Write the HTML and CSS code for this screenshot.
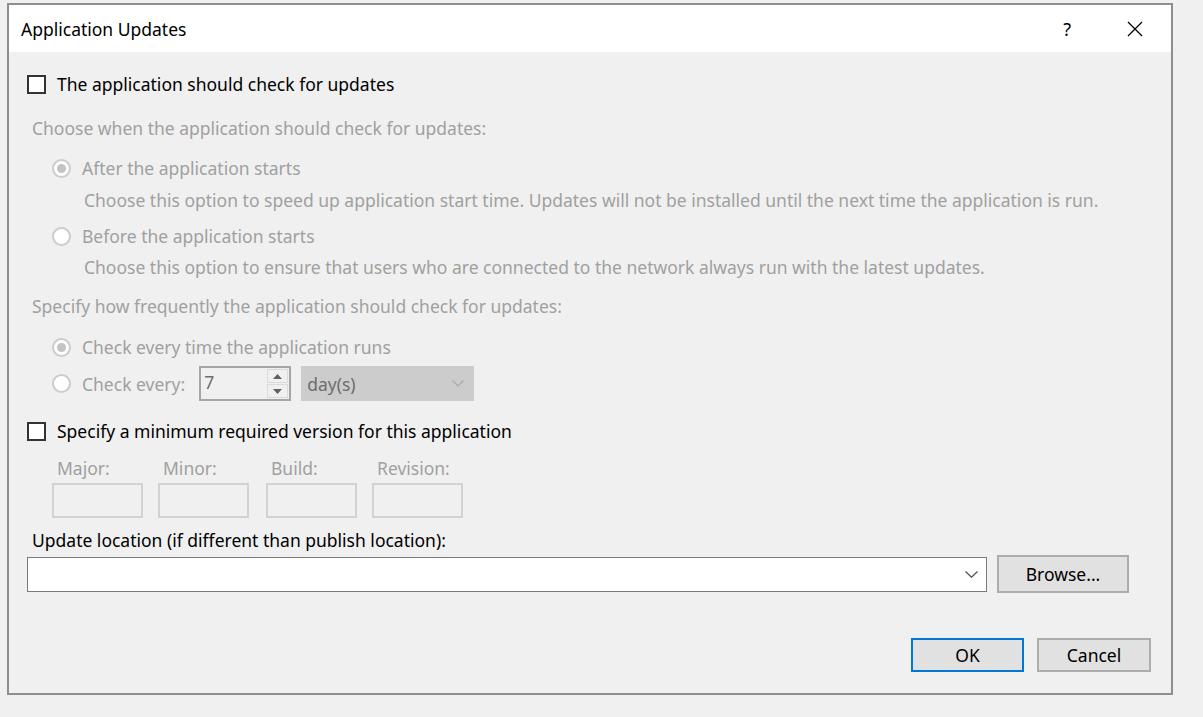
FILE: index.html
```html
<!DOCTYPE html>
<html lang="en">
<head>
    <meta charset="UTF-8">
    <meta name="viewport" content="width=device-width, initial-scale=1.0">
    <title>Application Updates</title>
    <link rel="stylesheet" href="styles.css">
</head>
<body>

    <div class="dialog">
        <div class="titlebar">
            <span class="title">Application Updates</span>
            <span class="help">?</span>
            <svg class="close" width="16" height="16" viewBox="0 0 16 16">
                <path d="M1 1 L15 15 M15 1 L1 15" stroke="#000" stroke-width="1.3" fill="none"/>
            </svg>
        </div>

        <div class="content">
            <div class="row r1">
                <span class="checkbox"></span>
                <span class="text">The application should check for updates</span>
            </div>

            <div class="row r2 off indent1">Choose when the application should check for updates:</div>

            <div class="row r3 indent2">
                <span class="radio checked"></span>
                <span class="text off">After the application starts</span>
            </div>
            <div class="row r4 off indent3">Choose this option to speed up application start time. Updates will not be installed until the next time the application is run.</div>

            <div class="row r5 indent2">
                <span class="radio"></span>
                <span class="text off">Before the application starts</span>
            </div>
            <div class="row r6 off indent3">Choose this option to ensure that users who are connected to the network always run with the latest updates.</div>

            <div class="row r7 off indent1">Specify how frequently the application should check for updates:</div>

            <div class="row r8 indent2">
                <span class="radio checked"></span>
                <span class="text off">Check every time the application runs</span>
            </div>

            <div class="row r9 indent2">
                <span class="radio"></span>
                <span class="text off">Check every:</span>
                <div class="spin">
                    <span class="spin-val">7</span>
                    <div class="spin-btns">
                        <span class="spin-btn">
                            <svg width="9" height="5" viewBox="0 0 9 5"><path d="M0 5 L4.5 0 L9 5 Z" fill="#606060"/></svg>
                        </span>
                        <span class="spin-btn">
                            <svg width="9" height="5" viewBox="0 0 9 5"><path d="M0 0 L4.5 5 L9 0 Z" fill="#606060"/></svg>
                        </span>
                    </div>
                </div>
                <div class="unit">
                    <span>day(s)</span>
                    <svg width="12" height="7" viewBox="0 0 12 7"><path d="M0.5 0.5 L6 6 L11.5 0.5" stroke="#a8a8a8" stroke-width="1.2" fill="none"/></svg>
                </div>
            </div>

            <div class="row r10">
                <span class="checkbox"></span>
                <span class="text">Specify a minimum required version for this application</span>
            </div>

            <div class="versions">
                <div class="ver">
                    <span class="ver-label off">Major:</span>
                    <span class="ver-box"></span>
                </div>
                <div class="ver">
                    <span class="ver-label off">Minor:</span>
                    <span class="ver-box"></span>
                </div>
                <div class="ver">
                    <span class="ver-label off">Build:</span>
                    <span class="ver-box"></span>
                </div>
                <div class="ver">
                    <span class="ver-label off">Revision:</span>
                    <span class="ver-box"></span>
                </div>
            </div>

            <div class="row r13 indent1">Update location (if different than publish location):</div>

            <div class="location">
                <div class="combo">
                    <svg width="13" height="7" viewBox="0 0 13 7"><path d="M0.5 0.5 L6.5 6.2 L12.5 0.5" stroke="#555" stroke-width="1.3" fill="none"/></svg>
                </div>
                <button class="btn browse">Browse...</button>
            </div>

            <div class="actions">
                <button class="btn ok">OK</button>
                <button class="btn">Cancel</button>
            </div>
        </div>
    </div>

</body>
</html>
```

FILE: styles.css
```css
body, html {
    margin: 0;
    padding: 0;
    height: 100%;
    overflow: hidden;
    background-color: #f0f0f0;
    color: #000;
    font-family: "Noto Sans", "Open Sans", sans-serif;
    font-size: 17.5px;
}

body {
    padding: 3px 0 0 7px;
    box-sizing: border-box;
}

.dialog {
    width: 1166px;
    height: 692px;
    box-sizing: border-box;
    border: 2px solid #8e8e8e;
    background: #f0f0f0;
    display: flex;
    flex-direction: column;
}

.titlebar {
    height: 47px;
    background: #fff;
    display: flex;
    align-items: center;
    padding-left: 12px;
}

.title {
    flex: 1;
}

.help {
    font-size: 18px;
    margin-right: 56px;
}

.close {
    margin-right: 28px;
}

.content {
    padding: 21px 20px 0 18px;
}

.row {
    height: 22px;
    display: flex;
    align-items: center;
    white-space: nowrap;
}

.off { color: #a0a0a0; }

.indent1 { padding-left: 5px; }
.indent2 { padding-left: 25px; }
.indent3 { padding-left: 57px; }

.r2  { margin-top: 22px; }
.r3  { margin-top: 18px; }
.r4  { margin-top: 10px; }
.r5  { margin-top: 14px; }
.r6  { margin-top: 9px; }
.r7  { margin-top: 17px; }
.r8  { margin-top: 19px; }
.r9  { margin-top: 8px; height: 35px; }
.r10 { margin-top: 19px; }
.r13 { margin-top: 11px; }

.checkbox {
    width: 19px;
    height: 19px;
    box-sizing: border-box;
    border: 2px solid #333;
    background: #fff;
    margin-right: 11px;
}

.radio {
    width: 19px;
    height: 19px;
    box-sizing: border-box;
    border: 2px solid #cccccc;
    border-radius: 50%;
    background: #fff;
    margin-right: 11px;
    display: flex;
    align-items: center;
    justify-content: center;
}

.radio.checked::after {
    content: "";
    width: 9px;
    height: 9px;
    border-radius: 50%;
    background: #c3c3c3;
}

.spin {
    width: 92px;
    height: 35px;
    box-sizing: border-box;
    border: 2px solid #a5a5a5;
    margin-left: 14px;
    display: flex;
    justify-content: space-between;
    background: #f0f0f0;
}

.spin-val {
    padding: 1px 0 0 3px;
    line-height: 26px;
    color: #6d6d6d;
}

.spin-btns {
    display: flex;
    flex-direction: column;
    padding: 1px 1px 1px 0;
    gap: 1px;
}

.spin-btn {
    width: 21px;
    flex: 1;
    box-sizing: border-box;
    border: 1px solid #dadada;
    display: flex;
    align-items: center;
    justify-content: center;
}

.unit {
    width: 173px;
    height: 35px;
    box-sizing: border-box;
    background: #cccccc;
    margin-left: 10px;
    display: flex;
    align-items: center;
    justify-content: space-between;
    padding: 0 10px 0 6px;
    color: #6d6d6d;
}

.versions {
    display: flex;
    margin-top: 15px;
    padding-left: 25px;
}

.ver {
    display: flex;
    flex-direction: column;
    margin-right: 15px;
}

.ver:nth-child(2) { margin-right: 17px; }

.ver-label {
    height: 22px;
    line-height: 22px;
    padding-left: 5px;
}

.ver-box {
    width: 91px;
    height: 35px;
    box-sizing: border-box;
    border: 2px solid #d2d2d2;
    margin-top: 4px;
}

.location {
    display: flex;
    align-items: center;
    height: 38px;
    margin-top: 4px;
}

.combo {
    width: 960px;
    height: 35px;
    box-sizing: border-box;
    border: 1.5px solid #7a7a7a;
    background: #fff;
    display: flex;
    align-items: center;
    justify-content: flex-end;
    padding-right: 8px;
}

.btn {
    font-family: inherit;
    font-size: 17.5px;
    color: #000;
    background: #e1e1e1;
    border: 2px solid #adadad;
    height: 34px;
    width: 114px;
    padding: 0;
}

.browse {
    width: 132px;
    height: 38px;
    margin-left: 10px;
}

.actions {
    display: flex;
    justify-content: flex-end;
    gap: 13px;
    margin-top: 45px;
}

.ok {
    width: 113px;
    border-color: #0078d7;
}
```
